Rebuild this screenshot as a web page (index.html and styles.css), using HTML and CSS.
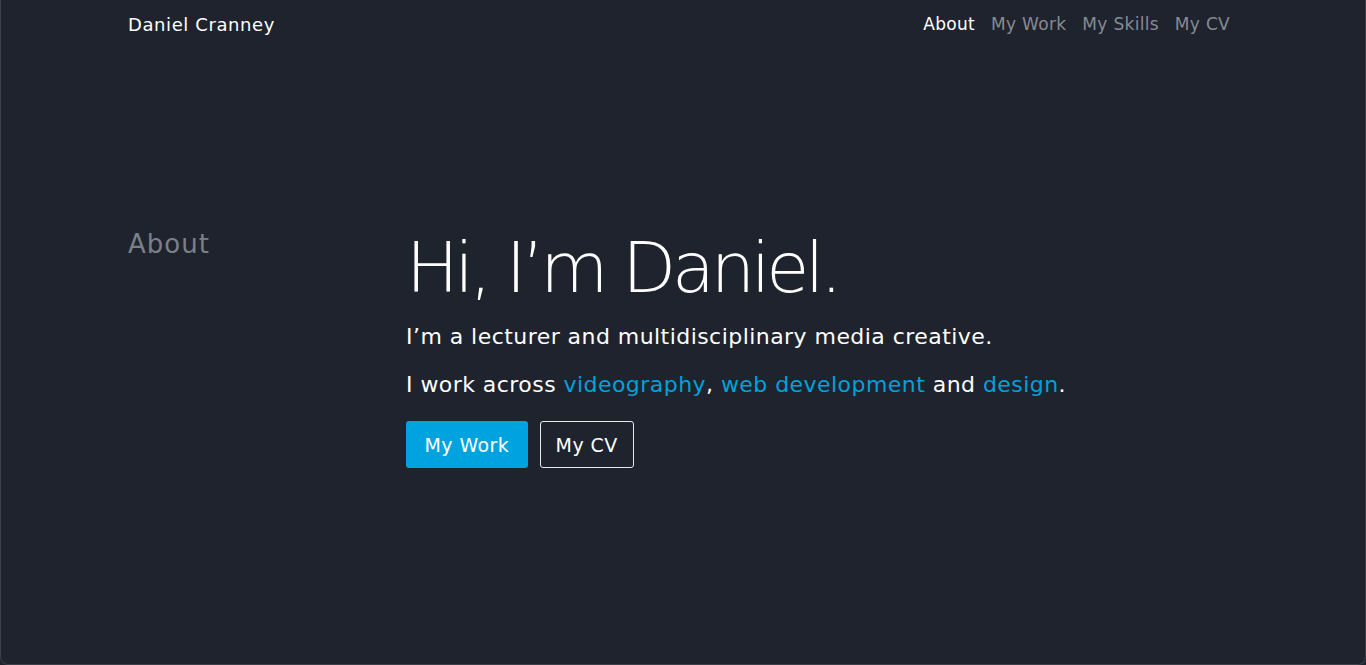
FILE: index.html
```html
<!DOCTYPE html>
<html lang="en">
<head>
<meta charset="utf-8">
<title>Daniel Cranney</title>
<link rel="stylesheet" href="styles.css">
</head>
<body>
<div class="frame">
  <header class="navbar">
    <a class="brand" href="#">Daniel Cranney</a>
    <nav class="nav">
      <a class="nav-link active" href="#">About</a>
      <a class="nav-link" href="#">My Work</a>
      <a class="nav-link" href="#">My Skills</a>
      <a class="nav-link" href="#">My CV</a>
    </nav>
  </header>
  <main class="section">
    <div class="side">About</div>
    <div class="content">
      <h1 class="title">Hi, I’m Daniel.</h1>
      <p class="lead">I’m a lecturer and multidisciplinary media creative.</p>
      <p class="lead">I work across <a href="#">videography</a>, <a href="#">web development</a> and <a href="#">design</a>.</p>
      <div class="buttons">
        <a class="btn btn-primary" href="#">My Work</a>
        <a class="btn btn-outline" href="#">My CV</a>
      </div>
    </div>
  </main>
</div>
</body>
</html>
```
FILE: styles.css
```css
* { box-sizing: border-box; }
html, body { margin: 0; padding: 0; height: 100%; background: #1e232d; }
body {
  font-family: "DejaVu Sans", "Liberation Sans", sans-serif;
  color: #ffffff;
}
a { text-decoration: none; color: inherit; }
.frame {
  height: 665px;
  border: 1px solid #3b4049;
  border-top: none;
  border-radius: 0 0 8px 8px;
  background: #1e232d;
  overflow: hidden;
}
.navbar {
  width: 1110px;
  margin: 0 auto;
  height: 48px;
  display: flex;
  align-items: center;
  justify-content: space-between;
}
.brand {
  font-size: 18px;
  color: #fff;
  letter-spacing: 0.6px;
}
.nav { display: flex; }
.nav-link {
  padding: 0 8px;
  font-size: 17px;
  letter-spacing: 0.3px;
  color: #868b93;
}
.nav-link.active { color: #fff; }
.section {
  width: 1110px;
  margin: 179px auto 0;
  display: grid;
  grid-template-columns: 278px 1fr;
}
.side {
  font-size: 26px;
  letter-spacing: 1px;
  color: #7b8088;
  padding-top: 2px;
}
.title {
  margin: 0;
  font-weight: 200;
  font-size: 70px;
  line-height: 83px;
  letter-spacing: -4.2px;
}
.lead {
  margin: 12px 0 0;
  font-size: 22px;
  line-height: 30px;
  letter-spacing: 0.45px;
}
.lead + .lead { margin-top: 18px; }
.lead a { color: #00a1dd; }
.buttons {
  display: flex;
  gap: 12px;
  margin-top: 21px;
}
.btn {
  display: inline-flex;
  align-items: center;
  height: 47px;
  border-radius: 3px;
  font-size: 19px;
  letter-spacing: 0.4px;
}
.btn-primary { background: #00a3df; color: #fff; padding: 0 18.5px; }
.btn-outline { border: 1px solid #e6e8ea; color: #fff; padding: 0 15px; }
```
